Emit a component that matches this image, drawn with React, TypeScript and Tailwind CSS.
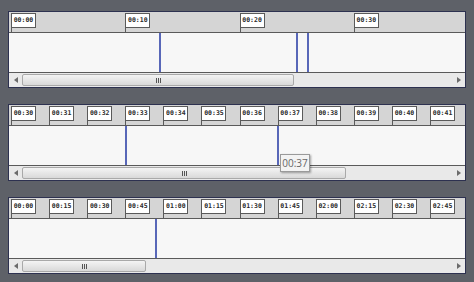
import React from 'react'

type Track = {
  labels: string[]
  slot: 'wide' | 'narrow'
  markers: number[]
  thumb: number
  tooltip?: { left: number; text: string }
}

const tracks: Track[] = [
  { labels: ['00:00', '00:10', '00:20', '00:30'], slot: 'wide', markers: [150, 287, 298], thumb: 272 },
  {
    labels: ['00:30', '00:31', '00:32', '00:33', '00:34', '00:35', '00:36', '00:37', '00:38', '00:39', '00:40', '00:41'],
    slot: 'narrow',
    markers: [116, 268],
    thumb: 324,
    tooltip: { left: 271, text: '00:37' },
  },
  {
    labels: ['00:00', '00:15', '00:30', '00:45', '01:00', '01:15', '01:30', '01:45', '02:00', '02:15', '02:30', '02:45'],
    slot: 'narrow',
    markers: [146],
    thumb: 124,
  },
]

function Label({ text, wide }: { text: string; wide: boolean }) {
  return (
    <div className={wide ? 'w-[114.3px] shrink-0 flex flex-col' : 'w-[38.1px] shrink-0 flex flex-col'}>
      <div className="w-[25px] h-[15px] bg-white border border-[#5a5a5a] flex items-center justify-center font-['DejaVu_Sans_Mono',monospace] font-bold text-[6.5px] leading-none text-[#2a2a2a]">
        {text}
      </div>
      <div className="w-px h-[4px] bg-[#5a5a5a]" />
    </div>
  )
}

function Arrow({ dir }: { dir: 'left' | 'right' }) {
  return (
    <div className="w-[13px] h-full flex items-center justify-center">
      <svg width="4" height="6" viewBox="0 0 4 6">
        <path d={dir === 'left' ? 'M4 0 L0 3 L4 6 Z' : 'M0 0 L4 3 L0 6 Z'} fill="#6b6b6b" />
      </svg>
    </div>
  )
}

function Timeline({ track }: { track: Track }) {
  return (
    <div className="w-[458px] h-[77px] shrink-0 border border-[#2d3150] bg-[#f6f6f6] flex flex-col">
      {/* ruler */}
      <div className="h-[21px] bg-[#d5d5d5] border-b border-[#5a5a5a] pl-[2px] pt-[1px] flex overflow-hidden">
        {track.labels.map((l) => (
          <Label key={l} text={l} wide={track.slot === 'wide'} />
        ))}
      </div>

      {/* canvas */}
      <div className="relative flex-1 bg-[#f7f7f7] border-b border-[#5a5a5a]">
        {track.markers.map((x) => (
          <div key={x} className="absolute top-0 bottom-0 w-[2px] bg-[#5867b8]" style={{ left: x }} />
        ))}
        {track.tooltip && (
          <div
            className="absolute top-[28px] z-10 w-[30px] h-[18px] bg-[#f3f3f3] border border-[#9a9a9a] shadow-[1px_1px_2px_rgba(0,0,0,0.35)] flex items-center justify-center font-['Open_Sans',sans-serif] text-[10px] leading-none text-[#666]"
            style={{ left: track.tooltip.left }}
          >
            {track.tooltip.text}
          </div>
        )}
      </div>

      {/* scrollbar */}
      <div className="h-[14px] bg-[#e9e9e9] flex items-center">
        <Arrow dir="left" />
        <div
          className="h-[12px] rounded-[2px] border border-[#a9a9a9] bg-gradient-to-b from-[#f4f4f4] to-[#d9d9d9] flex items-center justify-center gap-[1px]"
          style={{ width: track.thumb }}
        >
          <div className="w-px h-[5px] bg-[#555]" />
          <div className="w-px h-[5px] bg-[#555]" />
          <div className="w-px h-[5px] bg-[#555]" />
        </div>
        <div className="flex-1" />
        <Arrow dir="right" />
      </div>
    </div>
  )
}

export default function App() {
  return (
    <div className="w-[474px] h-[282px] bg-[#5e6168] pt-[11px] pl-[8px] flex flex-col gap-[16px] overflow-hidden">
      {tracks.map((t, i) => (
        <Timeline key={i} track={t} />
      ))}
    </div>
  )
}
